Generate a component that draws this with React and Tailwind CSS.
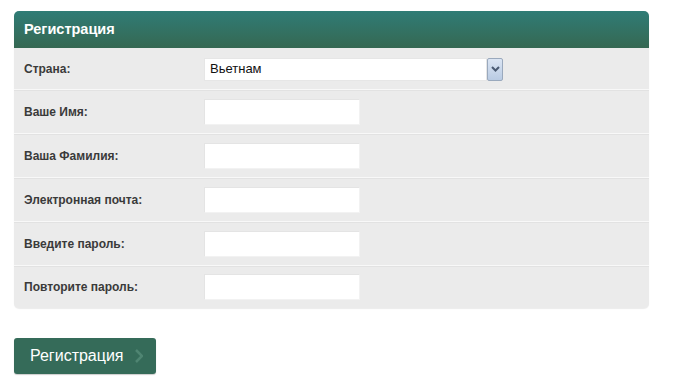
import React from "react";

const rows = [
  "Ваше Имя:",
  "Ваша Фамилия:",
  "Электронная почта:",
  "Введите пароль:",
  "Повторите пароль:",
];

export default function App() {
  return (
    <div className="w-[678px] h-[388px] bg-white pt-[11px] pl-[14px]" style={{ fontFamily: '"Liberation Sans", Arial, sans-serif' }}>
      <div className="w-[635px] rounded-[5px] bg-[#ebebeb] shadow-[0_1px_1px_rgba(0,0,0,0.08)]">
        <div className="h-[37px] rounded-t-[5px] bg-gradient-to-b from-[#2f7c76] to-[#356852] pl-[10px] flex items-center text-white font-bold text-[14.5px]">
          Регистрация
        </div>
        <div className="h-[42px] flex items-center border-b border-[#f8f8f8] shadow-[0_1px_0_#e2e2e2]">
          <div className="w-[190px] pl-[10px] text-[12px] font-bold text-[#3a3a3a]">Страна:</div>
          <div className="flex items-center h-[23px] mt-[1px]">
            <div className="w-[283px] h-[23px] bg-white border border-[#e6e6e6] flex items-center pl-[5px] text-[13px] text-[#111]">
              Вьетнам
            </div>
            <div className="w-[16px] h-[23px] border border-[#9aa9bd] rounded-[2px] bg-gradient-to-b from-[#dbe5f3] to-[#b9cbe3] flex items-center justify-center">
              <svg width="9" height="6" viewBox="0 0 9 6">
                <path d="M1 1 L4.5 4.5 L8 1" fill="none" stroke="#4a5a72" strokeWidth="2" />
              </svg>
            </div>
          </div>
        </div>
        {rows.map((label, i) => (
          <div
            key={label}
            className={`${i === rows.length - 1 ? "h-[42px]" : "h-[44px] border-b border-[#f8f8f8] shadow-[0_1px_0_#e2e2e2]"} flex items-center`}
          >
            <div className="w-[190px] pl-[10px] text-[12px] font-bold text-[#3a3a3a]">{label}</div>
            <div className="w-[156px] h-[26px] bg-white border border-[#e4e4e4] border-b-[#f2f2f2] border-r-[#f2f2f2]" />
          </div>
        ))}
      </div>
      <div className="mt-[30px] w-[142px] h-[36px] rounded-[3px] bg-[#356b59] shadow-[0_1px_1px_rgba(0,0,0,0.2)] flex items-center pl-[16px] text-white text-[16px]">
        <span>Регистрация</span>
        <svg className="ml-[11px]" width="8" height="14" viewBox="0 0 8 14">
          <path d="M1 1 L7 7 L1 13" fill="none" stroke="#4f8572" strokeWidth="2.5" />
        </svg>
      </div>
    </div>
  );
}
